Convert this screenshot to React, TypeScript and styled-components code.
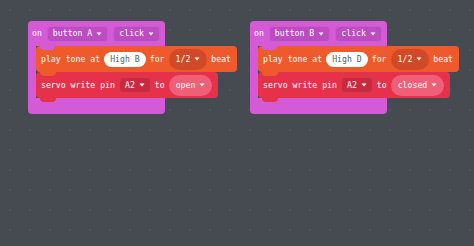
import styled, { createGlobalStyle } from 'styled-components';

const GlobalStyle = createGlobalStyle`
  html, body {
    margin: 0;
    padding: 0;
    background: #454b51;
  }
`;

const PURPLE = '#d45ad6';

const Workspace = styled.div`
  position: relative;
  width: 474px;
  height: 246px;
  overflow: hidden;
  background-color: #454b51;
  background-image: radial-gradient(rgba(255, 255, 255, 0.05) 1px, transparent 1.2px);
  background-size: 20px 20px;
  font-family: 'DejaVu Sans Mono', 'Liberation Mono', monospace;
  font-size: 8.2px;
  color: #fff;
`;

// event blocks sit at their own coordinates on the canvas
const EventBlock = styled.div<{ $x: number; $y: number }>`
  position: absolute;
  left: ${(p) => p.$x}px;
  top: ${(p) => p.$y}px;
  display: flex;
  flex-direction: column;
`;

const Hat = styled.div`
  position: relative;
  display: flex;
  align-items: center;
  gap: 5px;
  height: 25px;
  padding: 0 5px 0 4px;
  background: ${PURPLE};
  border-radius: 4px 4px 0 0;
  &::after {
    content: '';
    position: absolute;
    top: 100%;
    left: 12px;
    width: 15px;
    height: 4px;
    background: ${PURPLE};
    border-radius: 0 0 5px 5px;
    z-index: 1;
  }
`;

const Mouth = styled.div`
  display: flex;
`;

const Arm = styled.div`
  width: 8px;
  background: ${PURPLE};
`;

const Stack = styled.div`
  flex: none;
  width: 0;
  display: flex;
  flex-direction: column;
`;

const Foot = styled.div`
  height: 16px;
  background: ${PURPLE};
  border-radius: 0 0 4px 4px;
`;

const Statement = styled.div<{ $bg: string }>`
  position: relative;
  display: flex;
  align-items: center;
  gap: 4px;
  width: max-content;
  height: 26px;
  padding: 0 6px 0 5px;
  background: ${(p) => p.$bg};
  border-radius: 4px;
  &::after {
    content: '';
    position: absolute;
    top: 100%;
    left: 4px;
    width: 16px;
    height: 4px;
    background: ${(p) => p.$bg};
    border-radius: 0 0 5px 5px;
    z-index: 1;
  }
`;

const Label = styled.span`
  white-space: pre;
  line-height: 1;
`;

const Dropdown = styled.span<{ $bg: string; $edge: string }>`
  display: inline-flex;
  align-items: center;
  gap: 4px;
  height: 16px;
  padding: 0 5px;
  box-sizing: border-box;
  background: ${(p) => p.$bg};
  border: 1px solid ${(p) => p.$edge};
  border-radius: 4px;
  white-space: pre;
  line-height: 1;
`;

const Pill = styled.span<{ $bg: string }>`
  display: inline-flex;
  align-items: center;
  gap: 4px;
  height: 21px;
  padding: 0 7px;
  background: ${(p) => p.$bg};
  border-radius: 11px;
  white-space: pre;
  line-height: 1;
`;

const TextPill = styled.span`
  display: inline-flex;
  align-items: center;
  height: 15px;
  padding: 0 6px;
  background: #fff;
  color: #575e66;
  border-radius: 8px;
  white-space: pre;
  line-height: 1;
`;

const Arrow = () => (
  <svg width="6" height="4" viewBox="0 0 6 4">
    <path d="M0.5 0.5 L5.5 0.5 L3 3.5 Z" fill="#fff" />
  </svg>
);

const HAT_DD = { bg: '#bd4cc1', edge: '#c95ccd' };
const ORANGE = '#ef5a2c';
const RED = '#e5324a';

interface OnButtonProps {
  x: number;
  button: string;
  note: string;
  servo: string;
}

function OnButton({ x, button, note, servo }: OnButtonProps) {
  return (
    <EventBlock $x={x} $y={21}>
      <Hat>
        <Label>on</Label>
        <Dropdown $bg={HAT_DD.bg} $edge={HAT_DD.edge}>
          {`button ${button}`}
          <Arrow />
        </Dropdown>
        <Dropdown $bg={HAT_DD.bg} $edge={HAT_DD.edge}>
          click
          <Arrow />
        </Dropdown>
      </Hat>
      <Mouth>
        <Arm />
        <Stack>
          <Statement $bg={ORANGE}>
            <Label>play tone at</Label>
            <TextPill>{note}</TextPill>
            <Label>for</Label>
            <Pill $bg="#d04a27">
              1/2
              <Arrow />
            </Pill>
            <Label>beat</Label>
          </Statement>
          <Statement $bg={RED}>
            <Label>servo write pin</Label>
            <Dropdown $bg="#c92a40" $edge="#d33a50">
              A2
              <Arrow />
            </Dropdown>
            <Label>to</Label>
            <Pill $bg="#ef5f78">
              {servo}
              <Arrow />
            </Pill>
          </Statement>
        </Stack>
      </Mouth>
      <Foot />
    </EventBlock>
  );
}

export default function App() {
  return (
    <>
      <GlobalStyle />
      <Workspace>
        <OnButton x={28} button="A" note="High B" servo="open" />
        <OnButton x={250} button="B" note="High D" servo="closed" />
      </Workspace>
    </>
  );
}
